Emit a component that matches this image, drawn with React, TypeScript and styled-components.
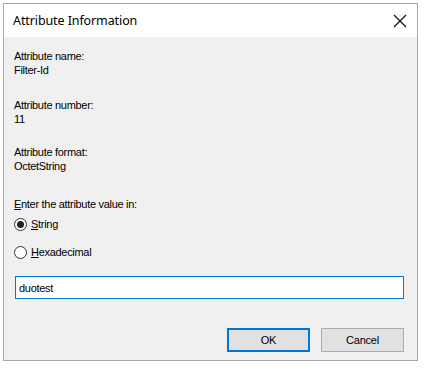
import React from "react";
import styled, { createGlobalStyle } from "styled-components";

const Global = createGlobalStyle`
  html, body {
    margin: 0;
    padding: 0;
    background: #ffffff;
  }
  body {
    font-family: "Liberation Sans", Arial, sans-serif;
  }
`;

const Page = styled.div`
  width: 425px;
  height: 369px;
  padding: 3px 0 0 3px;
  box-sizing: border-box;
`;

const Window = styled.div`
  width: 415px;
  height: 358px;
  box-sizing: border-box;
  border: 1px solid #a8a8a8;
  background: #f0f0f0;
  display: flex;
  flex-direction: column;
`;

const TitleBar = styled.div`
  height: 33px;
  background: #ffffff;
  display: flex;
  align-items: center;
  justify-content: space-between;
  padding: 0 9px 0 9px;
`;

const Title = styled.span`
  font-family: "Noto Sans", "Liberation Sans", sans-serif;
  font-size: 12.5px;
  color: #000;
  letter-spacing: -0.1px;
`;

const Close = styled.span`
  display: flex;
  width: 16px;
  height: 16px;
  align-items: center;
  justify-content: center;
`;

const Body = styled.div`
  flex: 1;
  padding: 13px 13px 0 10px;
  display: flex;
  flex-direction: column;
  font-size: 11px;
  color: #000;
  letter-spacing: -0.3px;
`;

const Field = styled.div<{ gap: number }>`
  display: flex;
  flex-direction: column;
  line-height: 13.5px;
  margin-bottom: ${(p) => p.gap}px;
`;

const Prompt = styled.div`
  line-height: 14px;
  margin-top: 4px;
`;

const RadioRow = styled.label<{ top: number }>`
  display: flex;
  align-items: center;
  gap: 4px;
  height: 14px;
  margin-top: ${(p) => p.top}px;
`;

const Circle = styled.span<{ checked?: boolean }>`
  width: 11px;
  height: 11px;
  border: 1px solid #333;
  border-radius: 50%;
  background: #fff;
  display: flex;
  align-items: center;
  justify-content: center;
  &::after {
    content: "";
    display: ${(p) => (p.checked ? "block" : "none")};
    width: 7px;
    height: 7px;
    border-radius: 50%;
    background: #222;
  }
`;

const TextBox = styled.div`
  margin-top: 17px;
  margin-left: 1px;
  height: 23px;
  box-sizing: border-box;
  border: 1px solid #0078d7;
  background: #fff;
  display: flex;
  align-items: center;
  padding-left: 3px;
`;

const Buttons = styled.div`
  display: flex;
  justify-content: flex-end;
  gap: 11px;
  margin-top: 29px;
`;

const Button = styled.button<{ primary?: boolean }>`
  width: 83px;
  height: 24px;
  box-sizing: border-box;
  background: #e1e1e1;
  border: ${(p) => (p.primary ? "2px solid #0078d7" : "1px solid #adadad")};
  font-family: "Liberation Sans", Arial, sans-serif;
  font-size: 11px;
  letter-spacing: -0.2px;
  color: #000;
  padding: 0;
`;

export default function App() {
  return (
    <Page>
      <Global />
      <Window>
        <TitleBar>
          <Title>Attribute Information</Title>
          <Close>
            <svg width="14" height="14" viewBox="0 0 14 14">
              <path d="M1 1 L13 13 M13 1 L1 13" stroke="#111" strokeWidth="1.3" />
            </svg>
          </Close>
        </TitleBar>
        <Body>
          <Field gap={22}>
            <span>Attribute name:</span>
            <span>Filter-Id</span>
          </Field>
          <Field gap={20}>
            <span>Attribute number:</span>
            <span>11</span>
          </Field>
          <Field gap={20}>
            <span>Attribute format:</span>
            <span>OctetString</span>
          </Field>
          <Prompt>
            <u>E</u>nter the attribute value in:
          </Prompt>
          <RadioRow top={6}>
            <Circle checked />
            <span>
              <u>S</u>tring
            </span>
          </RadioRow>
          <RadioRow top={14}>
            <Circle />
            <span>
              <u>H</u>exadecimal
            </span>
          </RadioRow>
          <TextBox>duotest</TextBox>
          <Buttons>
            <Button primary>OK</Button>
            <Button>Cancel</Button>
          </Buttons>
        </Body>
      </Window>
    </Page>
  );
}
